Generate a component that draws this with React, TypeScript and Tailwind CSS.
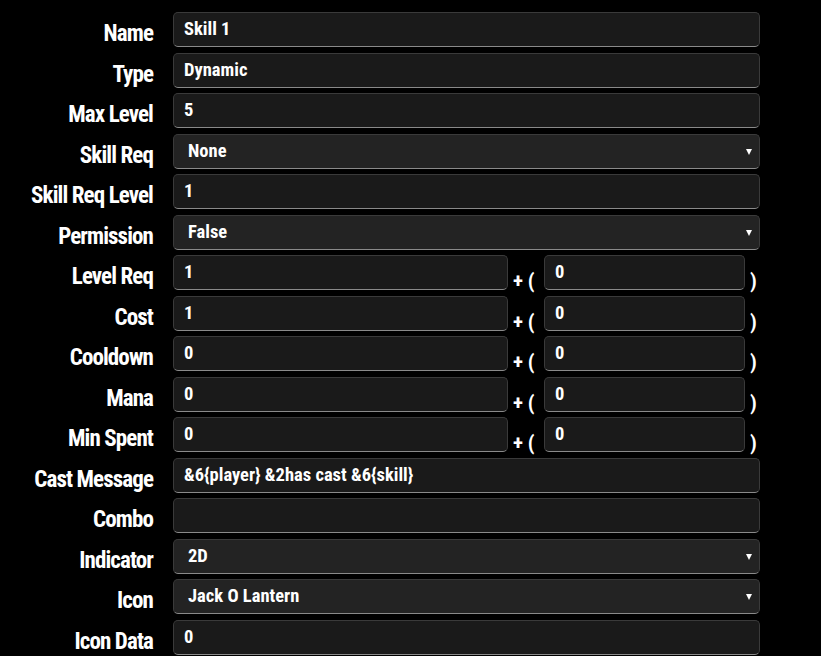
import React from 'react';

const font = { fontFamily: '"Roboto Condensed", "Arial Narrow", "Liberation Sans Narrow", "Liberation Sans", sans-serif' };

type Row =
    | { label: string; kind: 'text'; value: string }
    | { label: string; kind: 'select'; value: string }
    | { label: string; kind: 'split'; value: string; extra: string };

const rows: Row[] = [
    { label: 'Name', kind: 'text', value: 'Skill 1' },
    { label: 'Type', kind: 'text', value: 'Dynamic' },
    { label: 'Max Level', kind: 'text', value: '5' },
    { label: 'Skill Req', kind: 'select', value: 'None' },
    { label: 'Skill Req Level', kind: 'text', value: '1' },
    { label: 'Permission', kind: 'select', value: 'False' },
    { label: 'Level Req', kind: 'split', value: '1', extra: '0' },
    { label: 'Cost', kind: 'split', value: '1', extra: '0' },
    { label: 'Cooldown', kind: 'split', value: '0', extra: '0' },
    { label: 'Mana', kind: 'split', value: '0', extra: '0' },
    { label: 'Min Spent', kind: 'split', value: '0', extra: '0' },
    { label: 'Cast Message', kind: 'text', value: '&6{player} &2has cast &6{skill}' },
    { label: 'Combo', kind: 'text', value: '' },
    { label: 'Indicator', kind: 'select', value: '2D' },
    { label: 'Icon', kind: 'select', value: 'Jack O Lantern' },
    { label: 'Icon Data', kind: 'text', value: '0' },
];

function Field(props: { value: string; className?: string }) {
    return (
        <div className={"h-[35px] rounded-[5px] bg-[#1a1a1a] border border-[#3a3a3a] border-b-[#8a8a8a] px-[10px] pt-[5px] text-[18.5px] font-bold text-white leading-[22px] whitespace-nowrap " + (props.className ?? '')}>
            {props.value}
        </div>
    );
}

function Select(props: { value: string }) {
    return (
        <div className="h-[35px] flex-1 rounded-[5px] bg-[#232323] border border-[#3a3a3a] border-b-[#8a8a8a] pl-[14px] pr-[7px] pt-[5px] text-[18.5px] font-bold text-white leading-[22px] whitespace-nowrap flex justify-between">
            <span>{props.value}</span>
            <svg width="6" height="6" viewBox="0 0 6 6" className="mt-[9px]">
                <polygon points="0,0 6,0 3,6" fill="#ffffff" />
            </svg>
        </div>
    );
}

export default function App() {
    return (
        <div className="min-h-[656px] bg-black pt-[12px] text-white" style={font}>
            <div className="w-[760px] flex flex-col gap-[5.5px]">
                {rows.map((row) => (
                    <div key={row.label} className="flex h-[35px] items-stretch">
                        <div className="w-[153px] text-right text-[23px] tracking-[-0.9px] font-bold leading-none pt-[10px] shrink-0 whitespace-nowrap">{row.label}</div>
                        <div className="ml-[20px] flex-1 flex">
                            {row.kind === 'text' && <Field value={row.value} className="flex-1" />}
                            {row.kind === 'select' && <Select value={row.value} />}
                            {row.kind === 'split' && (
                                <>
                                    <Field value={row.value} className="w-[335px]" />
                                    <span className="w-[36px] text-[21px] font-bold pl-[5px] pt-[16px] leading-none whitespace-nowrap">+ (</span>
                                    <Field value={row.extra} className="w-[201px]" />
                                    <span className="w-[15px] text-[21px] font-bold pl-[5px] pt-[16px] leading-none">)</span>
                                </>
                            )}
                        </div>
                    </div>
                ))}
            </div>
        </div>
    );
}
